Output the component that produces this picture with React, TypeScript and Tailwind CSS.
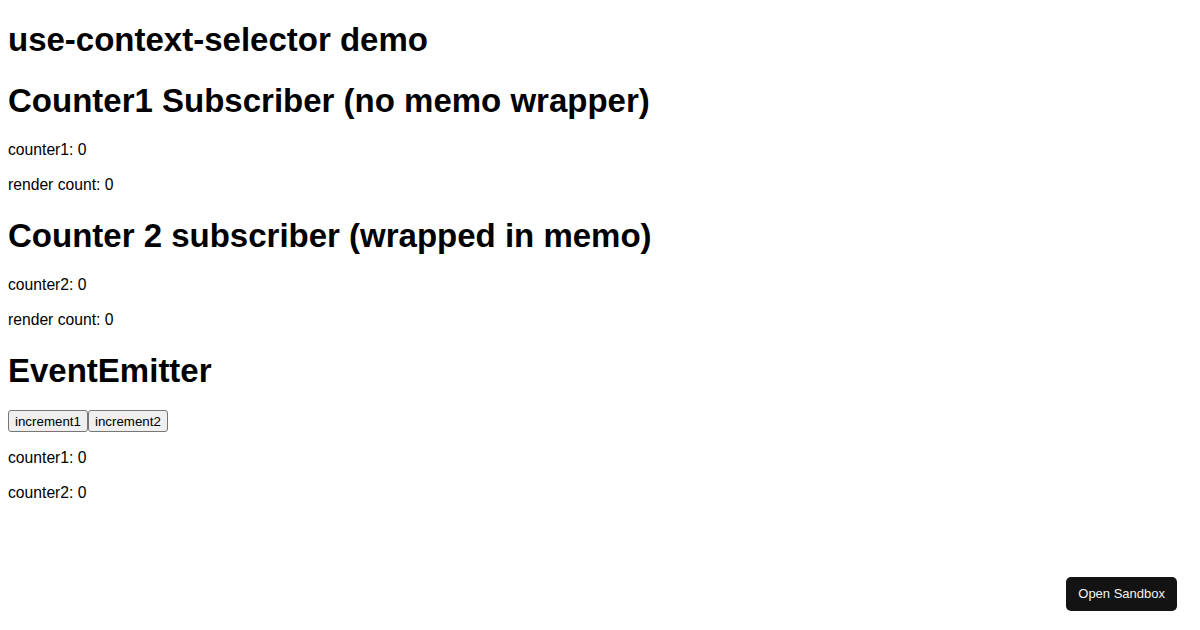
export default function App() {
  const h = "text-[33px] font-bold leading-[38px] mt-[23px] mb-[20px]";
  const p = "text-[15.7px] leading-[19px] my-4";
  const btn =
    "h-[22px] text-[13.333px] leading-[normal] px-[6px] bg-[#efefef] border border-[#767676] rounded-[3px] text-black";
  return (
    <div className="min-h-[630px] bg-white text-black px-2 py-[0.1px] font-['Liberation_Sans',Arial,sans-serif]">
      <h1 className="text-[33px] font-bold leading-[38px] mt-[21px] mb-[20px]">use-context-selector demo</h1>
      <h1 className={h}>Counter1 Subscriber (no memo wrapper)</h1>
      <p className={p}>counter1: 0</p>
      <p className={p}>render count: 0</p>
      <h1 className={h}>Counter 2 subscriber (wrapped in memo)</h1>
      <p className={p}>counter2: 0</p>
      <p className={p}>render count: 0</p>
      <h1 className={h}>EventEmitter</h1>
      <div className="flex">
        <button className={btn}>increment1</button>
        <button className={btn}>increment2</button>
      </div>
      <p className={p}>counter1: 0</p>
      <p className={p}>counter2: 0</p>
      <button className="fixed right-[23px] bottom-[19px] h-[34px] px-[12px] rounded-[5px] bg-[#131313] text-[#f2f2f2] text-[13px] font-['Liberation_Sans',Arial,sans-serif]">
        Open Sandbox
      </button>
    </div>
  );
}
